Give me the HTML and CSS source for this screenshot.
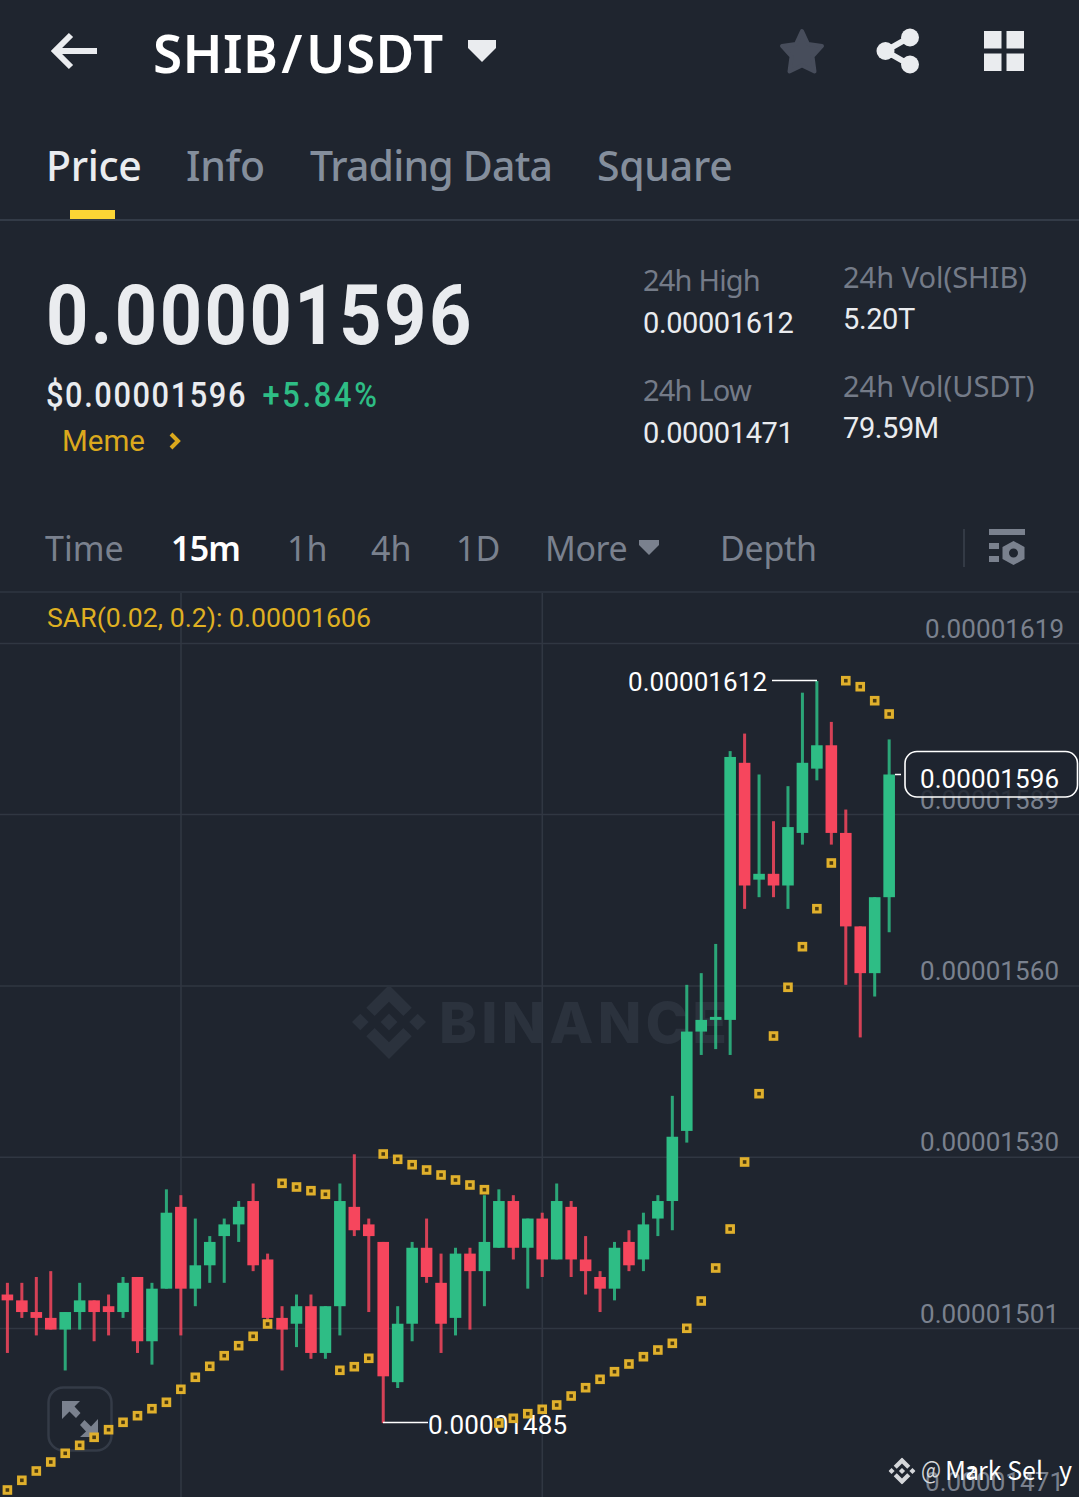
FILE: index.html
```
<!DOCTYPE html>
<html lang="en">
<head>
  <meta charset="UTF-8" />
  <meta name="viewport" content="width=device-width, initial-scale=1.0"/>
  <title>SHIB/USDT</title>
  <link rel="stylesheet" href="styles.css">
</head>
<body>

  <!-- Top bar -->
  <header class="topbar">
    <svg class="back" width="46" height="38" viewBox="0 0 46 38">
      <path d="M20 3 L4 19 L20 35 M4 19 H46" fill="none" stroke="#eaecef" stroke-width="6"/>
    </svg>
    <h1 class="pair">SHIB<span class="slash">/</span>USDT</h1>
    <svg class="caret" width="28" height="22" viewBox="0 0 28 22">
      <path d="M0 0 H28 V8 L14 22 L0 8 Z" fill="#eaecef"/>
    </svg>
    <div class="actions">
      <svg width="46" height="47" viewBox="0 0 46 47">
        <path d="M23 3 L29 16 L43 18 L33.500 28.500 L35.500 43.500 L23 37.500 L10.500 43.500 L12.500 28.500 L3 18 L17 16 Z" fill="#474d5b" stroke="#474d5b" stroke-width="4" stroke-linejoin="round"/>
      </svg>
      <svg class="share" width="44" height="46" viewBox="0 0 44 46">
        <path d="M34 9 L9.500 23 L34 37" fill="none" stroke="#eaecef" stroke-width="6"/>
        <circle cx="34" cy="9.500" r="9" fill="#eaecef"/>
        <circle cx="9.500" cy="23" r="9" fill="#eaecef"/>
        <circle cx="34" cy="36.500" r="9" fill="#eaecef"/>
      </svg>
      <svg class="grid-icon" width="40" height="40" viewBox="0 0 40 40" fill="#eaecef">
        <rect width="17.500" height="17.500"/>
        <rect x="22.500" width="17.500" height="17.500"/>
        <rect y="22.500" width="17.500" height="17.500"/>
        <rect x="22.500" y="22.500" width="17.500" height="17.500"/>
      </svg>
    </div>
  </header>

  <nav class="tabs">
    <span class="tab active">Price</span>
    <span class="tab info">Info</span>
    <span class="tab trading">Trading Data</span>
    <span class="tab square">Square</span>
  </nav>

  <!-- Price summary -->
  <section class="summary">
    <div class="quote">
      <div class="last">0.00001596</div>
      <div class="fiat">$0.00001596 <span class="change">+5.84%</span></div>
      <div class="tag">Meme
        <svg width="12" height="18" viewBox="0 0 12 18">
          <path d="M2 2 L9 9 L2 16" fill="none" stroke="#dba91d" stroke-width="4"/>
        </svg>
      </div>
    </div>
    <div class="stats range">
      <div class="label">24h High</div>
      <div class="value">0.00001612</div>
      <div class="label">24h Low</div>
      <div class="value">0.00001471</div>
    </div>
    <div class="stats volume">
      <div class="label">24h Vol(SHIB)</div>
      <div class="value">5.20T</div>
      <div class="label">24h Vol(USDT)</div>
      <div class="value">79.59M</div>
    </div>
  </section>

  <!-- Interval picker -->
  <nav class="intervals">
    <span class="time">Time</span>
    <span class="m15">15m</span>
    <span class="h1">1h</span>
    <span class="h4">4h</span>
    <span class="d1">1D</span>
    <span class="more">More
      <svg width="20" height="15" viewBox="0 0 20 15"><path d="M0 0 H20 V5 L10 15 L0 5 Z" fill="#7a818e"/></svg>
    </span>
    <span class="depth">Depth</span>
    <svg class="settings" width="36" height="38" viewBox="0 0 36 38">
      <g fill="#7a818e">
        <rect width="36" height="6"/>
        <rect y="14" width="10" height="6"/>
        <rect y="27" width="10" height="6"/>
        <path fill-rule="evenodd" d="M24.500 12 L35.500 18 V30 L24.500 36 L13.500 30 V18 Z M24.500 19.500 A4.500 4.500 0 1 0 24.500 28.500 A4.500 4.500 0 1 0 24.500 19.500 Z"/>
      </g>
    </svg>
  </nav>

  <!-- Candle chart -->
  <main class="chart">
    <svg id="chart" width="1079" height="904" viewBox="0 593 1079 904">
      <defs>
        <symbol id="logo" viewBox="0 0 126.610 126.610">
          <path d="M38.730 53.200 L63.310 28.620 L87.900 53.210 L102.200 38.910 L63.310 0 L24.430 38.900 Z"/>
          <path d="M0 63.310 L14.300 49 L28.600 63.310 L14.300 77.610 Z"/>
          <path d="M38.730 73.410 L63.310 98 L87.900 73.400 L102.210 87.690 L63.310 126.610 L24.430 87.720 Z"/>
          <path d="M98 63.310 L112.300 49 L126.610 63.300 L112.310 77.610 Z"/>
          <path d="M63.310 48.790 L77.820 63.310 L63.310 77.820 L48.790 63.310 Z"/>
        </symbol>
      </defs>
      <g id="grid" class="grid"></g>
      <g class="brand">
        <use href="#logo" x="352" y="985" width="74" height="74"/>
        <text x="439" y="1042.500" textLength="288">BINANCE</text>
      </g>
      <g id="axis" class="axis"></g>
      <g class="expand">
        <rect x="48.500" y="1387.500" width="63" height="63" rx="15"/>
        <path d="M62 1401 H80 L74.500 1406.500 L80.500 1413 L76 1418 L69.500 1411.500 L62 1419 Z"/>
        <path d="M98 1437 H80 L86 1431.500 L80 1425 L84.500 1420 L91 1426.500 L98 1419 Z"/>
      </g>
      <g id="candles"></g>
      <g class="marks">
        <path d="M772 680.500 H817 M383 1422.500 H428 M895 774.500 H901"/>
        <text x="628" y="691" textLength="139">0.00001612</text>
        <text x="428" y="1434" textLength="139">0.00001485</text>
      </g>
      <g id="sar" class="sar"></g>
      <text class="sar-label" x="47" y="627" textLength="324" lengthAdjust="spacingAndGlyphs">SAR(0.02, 0.2): 0.00001606</text>
      <g class="current">
        <rect x="905" y="751.500" width="172.500" height="45.500" rx="12"/>
        <text x="920" y="788" textLength="139">0.00001596</text>
      </g>
      <g class="author">
        <use href="#logo" x="888.500" y="1457.500" width="27" height="27"/>
        <text class="at" x="921" y="1479" textLength="20" lengthAdjust="spacingAndGlyphs">@</text>
        <text x="945" y="1480" textLength="21" lengthAdjust="spacingAndGlyphs">M</text>
        <text x="965" y="1480">a</text>
        <text class="small" x="967" y="1478">z</text>
        <text x="978" y="1480" textLength="65">rk Sel</text>
        <text x="1059" y="1480">y</text>
      </g>
    </svg>
  </main>

  <script>
    const UP = "#2ebd85";
    const DOWN = "#f6465d";

    // high, body top, body bottom, low, direction (prices in 1e-8 USDT)
    const candles = [
      [1509,1507,1506,1497,0], [1509,1506,1504,1503,0], [1510,1504,1503,1500,0], [1511,1503,1501,1501,0],
      [1504,1504,1501,1494,1], [1509,1506,1504,1501,1], [1506,1506,1504,1499,0], [1507,1505,1504,1500,0],
      [1510,1509,1504,1503,1], [1510,1510,1499,1497,0], [1509,1508,1499,1495,1], [1525,1521,1508,1508,1],
      [1524,1522,1508,1500,0], [1520,1512,1508,1505,1], [1517,1516,1512,1509,1], [1520,1519,1517,1509,1],
      [1523,1522,1519,1516,1], [1526,1523,1512,1511,0], [1514,1513,1503,1502,0], [1505,1503,1501,1494,0],
      [1507,1505,1502,1498,1], [1507,1505,1497,1496,0], [1505,1505,1497,1496,1], [1526,1523,1505,1500,1],
      [1531,1522,1518,1517,0], [1520,1519,1517,1504,0], [1516,1516,1493,1485,0], [1505,1502,1492,1491,1],
      [1516,1515,1502,1499,1], [1520,1515,1510,1509,0], [1514,1509,1502,1497,0], [1515,1514,1503,1500,1],
      [1515,1514,1511,1501,0], [1524,1516,1511,1505,1], [1525,1523,1515,1515,1], [1524,1523,1515,1513,0],
      [1520,1520,1515,1508,1], [1521,1520,1513,1510,0], [1526,1523,1513,1513,1], [1523,1522,1513,1510,0],
      [1517,1513,1511,1507,0], [1511,1510,1508,1504,0], [1516,1515,1508,1506,1], [1518,1516,1512,1511,0],
      [1521,1519,1513,1511,1], [1524,1523,1520,1517,1], [1541,1534,1523,1518,1], [1560,1552,1535,1533,1],
      [1562,1554,1552,1548,1], [1567,1554,1554,1549,1], [1600,1599,1554,1548,1], [1603,1598,1577,1573,0],
      [1596,1579,1578,1575,1], [1588,1579,1577,1575,0], [1594,1587,1577,1573,1], [1610,1598,1586,1584,1],
      [1612,1601,1597,1595,1], [1605,1601,1586,1584,0], [1590,1586,1570,1560,0], [1570,1570,1562,1551,0],
      [1575,1575,1562,1558,1], [1602,1596,1575,1569,1]
    ];

    // parabolic SAR, one chart y per candle
    const sar = [
      1490, 1480.3, 1471, 1462, 1453.3, 1445.3, 1437.3, 1429.7, 1422.3, 1415.7, 1408.7, 1402.3,
      1389.3, 1377.3, 1366.3, 1355.7, 1345.7, 1336.3, 1324, 1183.3, 1187, 1190.7, 1194.3,
      1370.3, 1366.7, 1358.3, 1154, 1159.3, 1164.7, 1170, 1175, 1180, 1185, 1189.7,
      1423, 1418.3, 1413.7, 1409.3, 1405, 1396, 1387.7, 1379.3, 1371.7, 1364, 1356.7, 1350, 1343.3,
      1328.3, 1301, 1268, 1229, 1162, 1093.7, 1036, 987.3, 946.7, 908.7, 863, 680.7, 686.7, 700.7, 714
    ];

    // label, line y, text x, text baseline
    const levels = [
      ["0.00001619", 643.5, 925, 638], ["0.00001589", 814.5, 920, 809], ["0.00001560", 986, 920, 980],
      ["0.00001530", 1157.3, 920, 1151], ["0.00001501", 1328.5, 920, 1323], ["0.00001471", null, 925, 1491]
    ];

    function xAt(i) {
      return 7.4 + i * 14.455;
    }

    function yAt(price) {
      return 681 + (1612 - price) * 5.843;
    }

    function rect(x, y, w, h, fill) {
      return `<rect x="${x}" y="${y}" width="${w}" height="${h}" fill="${fill}"/>`;
    }

    let lines = `<path d="M181 593 V1497 M542.300 593 V1497"/>`;
    let labels = "";
    levels.forEach(([label, y, tx, ty]) => {
      if (y) lines += `<path d="M0 ${y} H1079"/>`;
      labels += `<text x="${tx}" y="${ty}" textLength="139">${label}</text>`;
    });
    document.getElementById("grid").innerHTML = lines;
    document.getElementById("axis").innerHTML = labels;

    let bars = "";
    candles.forEach(([high, top, bottom, low, up], i) => {
      const color = up ? UP : DOWN;
      const x = xAt(i);
      bars += `<g opacity="0.85">${rect(x - 1.5, yAt(high), 3, yAt(low) - yAt(high), color)}</g>`;
      const h = Math.max(yAt(bottom) - yAt(top), 3);
      bars += rect(x - 5.8, yAt(bottom) - h, 11.6, h, color);
    });
    document.getElementById("candles").innerHTML = bars;

    document.getElementById("sar").innerHTML = sar.map((y, i) =>
      `<rect x="${xAt(i) - 3.3}" y="${y - 3.3}" width="6.600" height="6.600"/>`
    ).join("");
  </script>

</body>
</html>
```

FILE: styles.css
```
body {
  margin: 0;
  width: 1079px;
  height: 1497px;
  overflow: hidden;
  background: #1f252f;
  color: #eaecef;
  font-family: 'Noto Sans', sans-serif;
}

svg {
  display: block;
  flex: none;
}

.topbar {
  display: flex;
  align-items: center;
  height: 102px;
  padding: 0 55px 0 51px;
}

.pair {
  margin: 2px 0 0 56px;
  width: 292px;
  color: #fff;
  font-size: 53px;
  font-weight: 600;
  line-height: 1;
  letter-spacing: 0.4px;
  white-space: nowrap;
}

.slash {
  margin: 0 3px;
}

.caret {
  margin-left: 23px;
}

.actions {
  display: flex;
  align-items: center;
  margin-left: auto;
}

.share {
  margin-left: 51px;
}

.grid-icon {
  margin-left: 64px;
}

.tabs {
  display: flex;
  box-sizing: border-box;
  height: 119px;
  padding: 33px 0 0 46px;
  border-bottom: 2px solid #333b47;
  color: #848e9c;
  font-size: 41px;
  font-weight: 500;
  line-height: 60px;
  letter-spacing: -0.3px;
  white-space: nowrap;
}

.tab {
  box-sizing: border-box;
  height: 84px;
}

.tab.active {
  display: flex;
  flex-direction: column;
  width: 140px;
  color: #eaecef;
}

.tab.active::after {
  content: "";
  width: 45px;
  height: 9px;
  margin: 15px 0 0 24px;
  background: #fcd535;
}

.info {
  width: 124px;
}

.trading {
  width: 287px;
  letter-spacing: -0.8px;
}

.summary {
  display: flex;
  height: 281px;
}

.quote {
  width: 643px;
  padding: 44px 0 0 46px;
  box-sizing: border-box;
  font-family: Roboto, sans-serif;
}

/* condensed digits */
.last,
.fiat {
  transform: scaleX(0.88);
  transform-origin: left;
  white-space: nowrap;
}

.last {
  height: 98px;
  font-size: 84px;
  font-weight: 700;
  line-height: 101px;
  letter-spacing: 2.8px;
}

.fiat {
  margin-top: 11px;
  font-size: 35px;
  font-weight: 500;
  line-height: 44px;
  letter-spacing: 1.8px;
}

.change {
  margin-left: 7px;
  color: #2ebd85;
  letter-spacing: 3.1px;
}

.tag {
  display: flex;
  align-items: center;
  gap: 24px;
  padding: 3px 0 0 16px;
  color: #dba91d;
  font-size: 29.5px;
  line-height: 40px;
}

.stats {
  width: 200px;
  padding-top: 39px;
  box-sizing: border-box;
  white-space: nowrap;
}

.volume {
  padding-top: 36px;
}

.label {
  color: #747b88;
  font-size: 29px;
  line-height: 40px;
}

.range .label {
  letter-spacing: -0.8px;
}

.value {
  margin-bottom: 24px;
  font-family: Roboto, sans-serif;
  font-size: 29px;
  line-height: 46px;
  letter-spacing: -0.4px;
}

.range .value {
  line-height: 47px;
  margin-bottom: 23px;
}

.volume .value {
  line-height: 45px;
}

.intervals {
  display: flex;
  align-items: center;
  box-sizing: border-box;
  height: 91px;
  padding: 2px 0 0 45px;
  border-bottom: 2px solid #2a313c;
  color: #7a818e;
  font-size: 34px;
  line-height: 48px;
  white-space: nowrap;
}

.time {
  width: 126px;
}

.m15 {
  width: 116px;
  color: #fff;
  font-weight: 600;
  letter-spacing: -0.8px;
}

.h1 {
  width: 84px;
}

.h4 {
  width: 85px;
}

.d1 {
  width: 89px;
}

.more {
  display: flex;
  align-items: center;
  gap: 12px;
  width: 175px;
  letter-spacing: -0.4px;
}

.depth {
  width: 243px;
  letter-spacing: -0.3px;
}

.settings {
  padding-left: 24px;
  border-left: 2px solid #333a45;
}

.chart text {
  font-family: Roboto, sans-serif;
  font-size: 26px;
}

.grid path {
  stroke: #303742;
  stroke-width: 1.6;
}

.axis {
  fill: #7a818e;
}

.brand {
  fill: #2b323d;
}

.chart .brand text {
  font-family: Inter, sans-serif;
  font-size: 57px;
  font-weight: 800;
}

.expand {
  fill: #7a818e;
}

.expand rect {
  fill: none;
  stroke: #343b47;
  stroke-width: 2.5;
}

.marks {
  fill: #fff;
}

.marks path {
  stroke: #fff;
  stroke-width: 1.6;
}

.sar rect {
  fill: #4a3a10;
  stroke: #e0b02c;
  stroke-width: 3;
}

.sar-label {
  fill: #dfb022;
}

.current rect {
  fill: #1f252f;
  fill-opacity: 0.85;
  stroke: #fff;
  stroke-width: 1.6;
}

.current text {
  fill: #fff;
}

.author {
  fill: #fff;
}

.author use,
.author .at {
  fill: #d5d7da;
}

.chart .author text {
  font-family: 'Noto Sans CJK SC', sans-serif;
  font-size: 25px;
}

.chart .author .small {
  font-size: 18px;
}
```
